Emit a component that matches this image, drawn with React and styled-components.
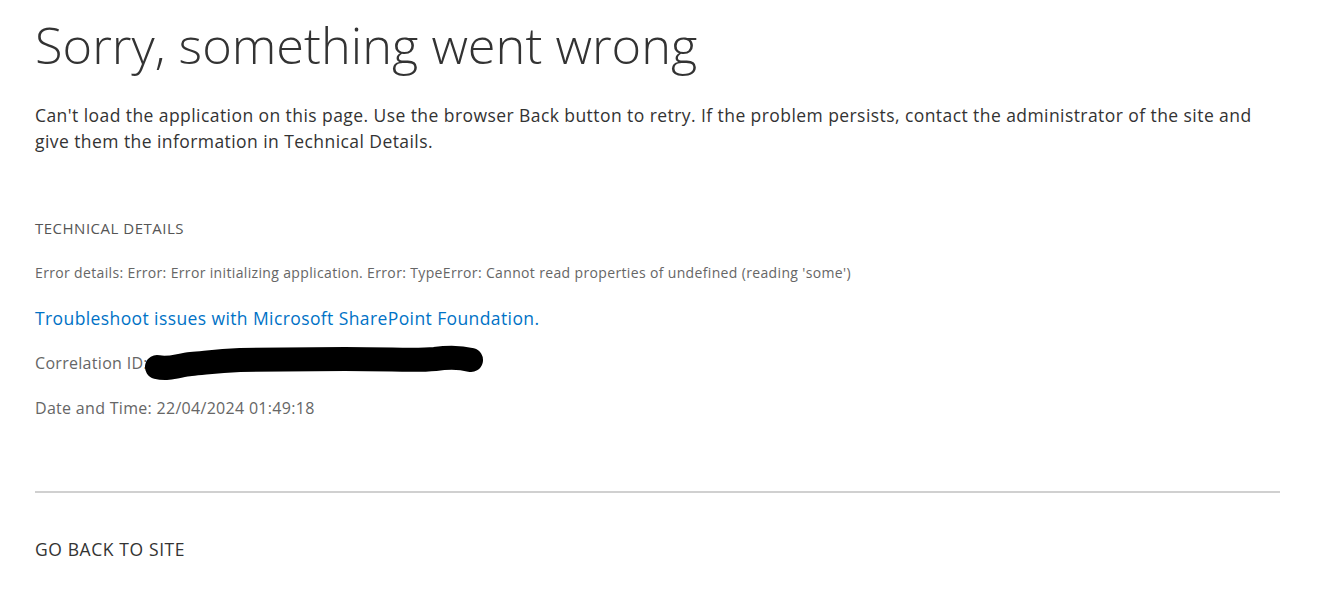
import React from "react";
import styled, { createGlobalStyle } from "styled-components";

const GlobalStyle = createGlobalStyle`
  html, body {
    margin: 0;
    padding: 0;
    background: #fff;
  }
  body {
    font-family: "Open Sans", "Noto Sans", sans-serif;
    color: #444;
  }
`;

const Page = styled.div`
  width: 1245px;
  padding: 12px 0 0 35px;
`;

const Heading = styled.h1`
  margin: 0;
  font-size: 50.5px;
  font-weight: 300;
  line-height: 66px;
  color: #333;
`;

const Message = styled.p`
  margin: 24px 0 0;
  font-size: 17.5px;
  line-height: 26px;
  letter-spacing: 0.43px;
  color: #333;
`;

const Details = styled.div`
  margin-top: 64px;
  display: flex;
  flex-direction: column;
`;

const Label = styled.div`
  font-size: 15px;
  line-height: 20px;
  letter-spacing: 0.5px;
  color: #555;
  text-transform: uppercase;
`;

const Row = styled.div`
  position: relative;
  margin-top: ${p => p.gap || 25}px;
  font-size: ${p => p.size || 14}px;
  line-height: 20px;
  letter-spacing: ${p => p.spacing || 0.3}px;
  color: #666;
`;

const Link = styled.a`
  color: #0072c6;
  text-decoration: none;
  font-size: 17.5px;
  letter-spacing: 0.4px;
`;

// hand-drawn redaction over the correlation id
const Scribble = styled.svg`
  position: absolute;
  left: 110px;
  top: -10px;
  width: 345px;
  height: 40px;
  overflow: visible;
`;

const Divider = styled.hr`
  margin: 73px 0 0;
  border: none;
  border-top: 2px solid #d0d0d0;
`;

const BackLink = styled.a`
  display: block;
  margin-top: 44px;
  font-size: 17.5px;
  line-height: 24px;
  letter-spacing: 0.6px;
  color: #333;
  text-decoration: none;
  text-transform: uppercase;
`;

export default function App() {
  return (
    <>
      <GlobalStyle />
      <Page>
        <Heading>Sorry, something went wrong</Heading>
        <Message>
          Can't load the application on this page. Use the browser Back button to retry. If the
          problem persists, contact the administrator of the site and give them the information in
          Technical Details.
        </Message>
        <Details>
          <Label>Technical Details</Label>
          <Row size={14} spacing={0.35}>
            Error details: Error: Error initializing application. Error: TypeError: Cannot read
            properties of undefined (reading 'some')
          </Row>
          <Row>
            <Link href="#">Troubleshoot issues with Microsoft SharePoint Foundation.</Link>
          </Row>
          <Row gap={23} size={16}>
            Correlation ID:
            <Scribble viewBox="0 0 345 40">
              <path
                d="M12 24 C24 27 34 22 46 21 C60 20 70 18 95 17 L200 16 C250 16 270 18 290 16 C305 14 318 15 326 17"
                fill="none"
                stroke="#000"
                strokeWidth="24"
                strokeLinecap="round"
                strokeLinejoin="round"
              />
            </Scribble>
          </Row>
          <Row size={16}>Date and Time: 22/04/2024 01:49:18</Row>
        </Details>
        <Divider />
        <BackLink href="#">Go back to site</BackLink>
      </Page>
    </>
  );
}
